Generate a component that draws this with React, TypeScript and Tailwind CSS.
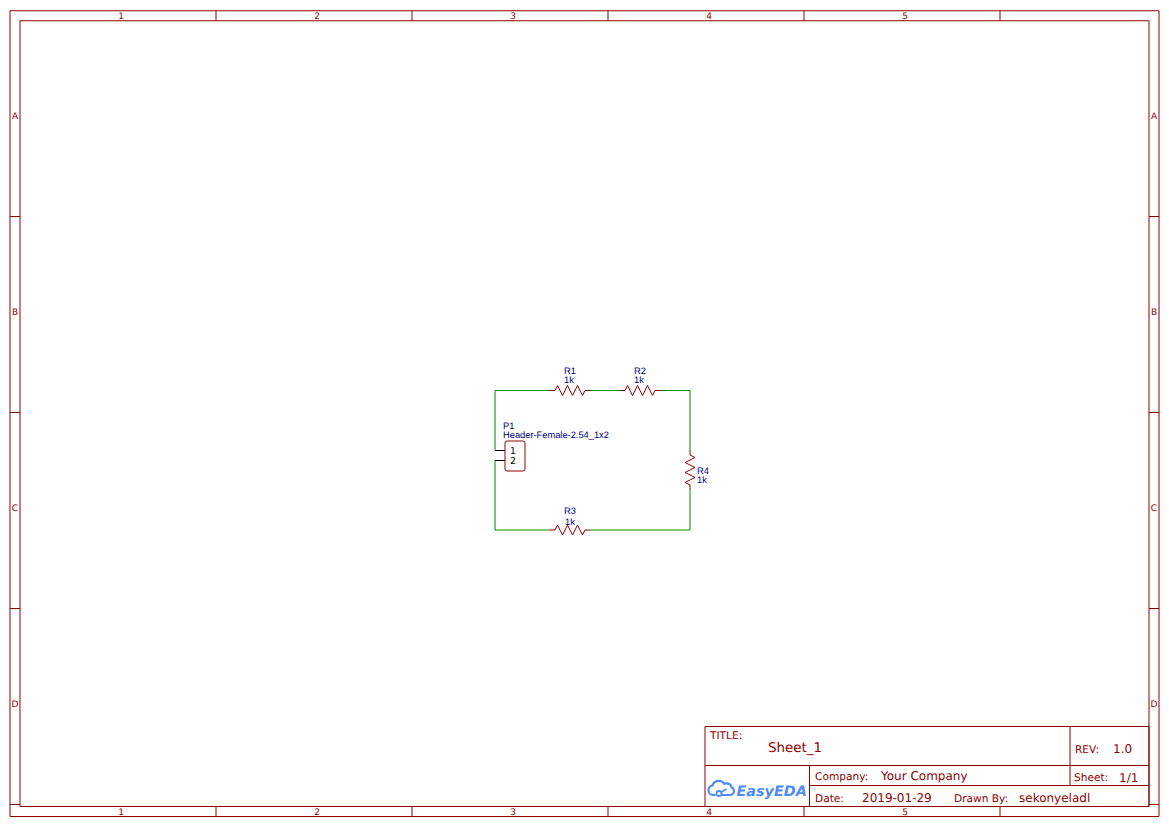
const RED = "#8f0000";
const NAVY = "#000080";
const GREEN = "#008800";
const BLUE = "#4f8cf6";

const columns = ["1", "2", "3", "4", "5"];
const rows = ["A", "B", "C", "D"];

function zigzagH(x: number, y: number) {
  return `M${x} ${y}h5l2.5 -5l5 10l5 -10l5 10l5 -10l5 10l2.5 -5h5`;
}

function Resistor({ x, y }: { x: number; y: number }) {
  return <path d={zigzagH(x, y)} fill="none" stroke={RED} strokeWidth="1" />;
}

function Label({ x, y, children }: { x: number; y: number; children: string }) {
  return (
    <text x={x} y={y} fill={NAVY} className="font-['Liberation_Sans',sans-serif] text-[9.3px] [text-rendering:geometricPrecision]">
      {children}
    </text>
  );
}

function FrameText({ x, y, size, children, center }: { x: number; y: number; size: "xs" | "sm" | "md" | "lg"; children: string; center?: boolean }) {
  const sizeClass = size === "xs" ? "text-[9px]" : size === "sm" ? "text-[10.6px]" : size === "md" ? "text-[12px]" : "text-[13.4px]";
  return (
    <text x={x} y={y} fill={RED} textAnchor={center ? "middle" : "start"} className={`font-['DejaVu_Sans',sans-serif] [text-rendering:geometricPrecision] ${sizeClass}`}>
      {children}
    </text>
  );
}

function Logo() {
  return (
    <g>
      <path
        d="M715.5 795h-2.5c-2.7 0 -4.5 -2.2 -4.5 -4.7c0 -2.6 1.8 -4.4 4 -4.8c.8 -3 3.5 -4.7 6.3 -4.7c2.4 0 4.4 1.1 5.6 3c.6 -.3 1.3 -.4 2 -.4c2.6 0 4.7 1.8 5.2 4.2c1.4 .6 2.4 2 2.4 3.5c0 2.4 -2 3.9 -4.4 3.9h-8"
        fill="none"
        stroke={BLUE}
        strokeWidth="2.2"
      />
      <circle cx="719" cy="793.5" r="2.5" fill="none" stroke={BLUE} strokeWidth="1.8" />
      <path d="M721.2 792l5.3 -3" fill="none" stroke={BLUE} strokeWidth="1.8" />
      <text x="736.5" y="795.5" fill={BLUE} className="font-['DejaVu_Sans',sans-serif] text-[14.4px] font-bold italic [text-rendering:geometricPrecision]">
        EasyEDA
      </text>
    </g>
  );
}

export default function App() {
  return (
    <div className="h-[827px] w-[1169px] overflow-hidden bg-white">
      <svg width="1169" height="827" viewBox="0 0 1169 827" className="block">
        {/* sheet frame */}
        <g fill="none" stroke={RED} strokeWidth="1">
          <path d="M10 10.75H1159V816.5H10Z" />
          <path d="M20 20.75H1149V806.5H20Z" />
          {[216, 412, 608, 804, 1000].map((x) => (
            <g key={x}>
              <path d={`M${x} 10.75V20.75`} />
              <path d={`M${x} 806.5v10`} />
            </g>
          ))}
          {[216.5, 412.5, 608.5, 804.5].map((y) => (
            <g key={y}>
              <path d={`M10 ${y}h10`} />
              <path d={`M1149 ${y}h10`} />
            </g>
          ))}
        </g>
        {columns.map((c, i) => (
          <g key={c}>
            <FrameText x={121 + i * 196} y={19} size="xs" center>{c}</FrameText>
            <FrameText x={121 + i * 196} y={815} size="xs" center>{c}</FrameText>
          </g>
        ))}
        {rows.map((r, i) => (
          <g key={r}>
            <FrameText x={15} y={119 + i * 196} size="xs" center>{r}</FrameText>
            <FrameText x={1154} y={119 + i * 196} size="xs" center>{r}</FrameText>
          </g>
        ))}

        {/* title block */}
        <g fill="none" stroke={RED} strokeWidth="1">
          <path d="M705 726.5H1149V806.5H705Z" />
          <path d="M705 765.5h444" />
          <path d="M809.5 785.5h339.5" />
          <path d="M1070 726.5v59" />
          <path d="M809.5 765.5v41" />
        </g>
        <FrameText x={710} y={739} size="sm">TITLE:</FrameText>
        <FrameText x={768} y={752} size="lg">Sheet_1</FrameText>
        <FrameText x={1075} y={753} size="sm">REV:</FrameText>
        <FrameText x={1113} y={753} size="md">1.0</FrameText>
        <FrameText x={815} y={780} size="sm">Company:</FrameText>
        <FrameText x={881} y={780} size="md">Your Company</FrameText>
        <FrameText x={1074} y={781} size="sm">Sheet:</FrameText>
        <FrameText x={1119} y={782} size="md">1/1</FrameText>
        <FrameText x={815} y={802} size="sm">Date:</FrameText>
        <FrameText x={862} y={802} size="md">2019-01-29</FrameText>
        <FrameText x={954} y={802} size="sm">Drawn By:</FrameText>
        <FrameText x={1019} y={802} size="md">sekonyeladl</FrameText>
        <Logo />

        {/* wires */}
        <path
          d="M495 450V390.5H550M590 390.5H620M660 390.5H690V450M690 490V530H590M550 530H495V460"
          fill="none"
          stroke={GREEN}
          strokeWidth="1"
        />

        {/* resistors */}
        <Resistor x={550} y={390.5} />
        <Resistor x={620} y={390.5} />
        <Resistor x={550} y={530} />
        <path d="M690 450v5l5 2.5l-10 5l10 5l-10 5l10 5l-10 5l5 2.5v5" fill="none" stroke={RED} strokeWidth="1" />

        {/* header */}
        <path d="M495 450.5h10M495 460.5h10" stroke="#000000" strokeWidth="1" />
        <rect x="505" y="441" width="20" height="30" rx="2" fill="none" stroke={RED} strokeWidth="1" />
        <text x="510" y="454" fill="#000000" className="font-['DejaVu_Sans',sans-serif] text-[9.33px] [text-rendering:geometricPrecision]">1</text>
        <text x="510" y="464" fill="#000000" className="font-['DejaVu_Sans',sans-serif] text-[9.33px] [text-rendering:geometricPrecision]">2</text>

        <Label x={564} y={374}>R1</Label>
        <Label x={564} y={383}>1k</Label>
        <Label x={634} y={374}>R2</Label>
        <Label x={634} y={383}>1k</Label>
        <Label x={503} y={429}>P1</Label>
        <Label x={503} y={438}>Header-Female-2.54_1x2</Label>
        <Label x={697} y={474}>R4</Label>
        <Label x={697} y={483}>1k</Label>
        <Label x={564} y={514}>R3</Label>
        <Label x={565} y={525}>1k</Label>
      </svg>
    </div>
  );
}
